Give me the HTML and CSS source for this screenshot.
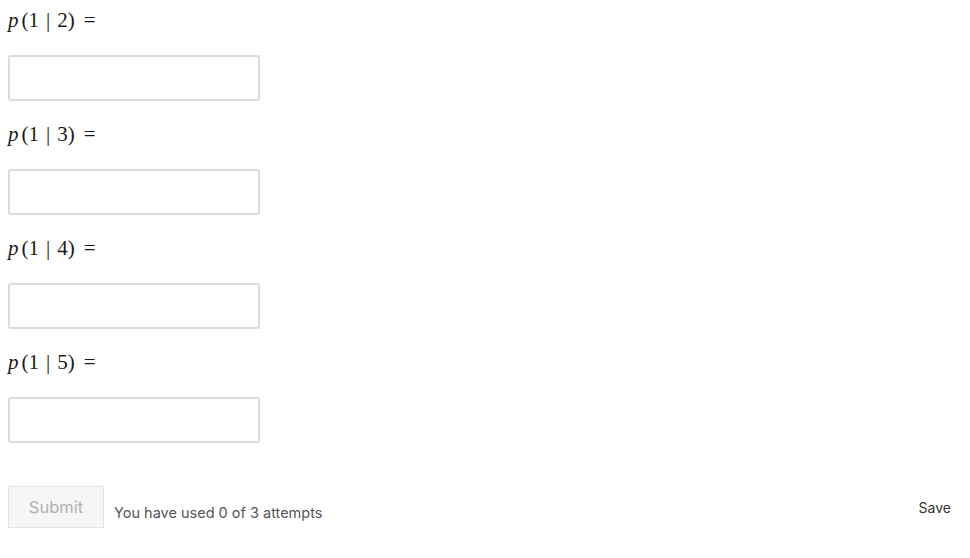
FILE: index.html
```html
<!DOCTYPE html>
<html>
<head>
<meta charset="utf-8">
<link rel="stylesheet" href="styles.css">
</head>
<body>
<div class="problem">
  <div class="item">
    <div class="math"><i class="var">p</i><span class="op">(</span>1<span class="bar">|</span>2<span class="op">)</span><span class="eq">=</span></div>
    <input class="answer" type="text">
  </div>
  <div class="item">
    <div class="math"><i class="var">p</i><span class="op">(</span>1<span class="bar">|</span>3<span class="op">)</span><span class="eq">=</span></div>
    <input class="answer" type="text">
  </div>
  <div class="item">
    <div class="math"><i class="var">p</i><span class="op">(</span>1<span class="bar">|</span>4<span class="op">)</span><span class="eq">=</span></div>
    <input class="answer" type="text">
  </div>
  <div class="item">
    <div class="math"><i class="var">p</i><span class="op">(</span>1<span class="bar">|</span>5<span class="op">)</span><span class="eq">=</span></div>
    <input class="answer" type="text">
  </div>
</div>
<div class="actions">
  <button class="submit" disabled>Submit</button>
  <span class="attempts">You have used 0 of 3 attempts</span>
  <span class="save">Save</span>
</div>
</body>
</html>
```

FILE: styles.css
```css
html, body {
  margin: 0;
  padding: 0;
  background: #fff;
}
body {
  padding: 0 8px;
  font-family: "Inter", "Liberation Sans", sans-serif;
}
.problem {
  display: flex;
  flex-direction: column;
}
.item {
  display: flex;
  flex-direction: column;
  align-items: flex-start;
  height: 114px;
}
.math {
  font-family: "Liberation Serif", "DejaVu Serif", serif;
  font-size: 21px;
  line-height: 24px;
  margin-top: 8px;
  color: #1a1a1a;
}
.math .var {
  font-style: italic;
  margin-right: 3px;
}
.math .bar {
  margin: 0 7px;
}
.math .eq {
  margin-left: 9px;
}
.answer {
  margin-top: 23px;
  width: 252px;
  height: 46px;
  box-sizing: border-box;
  border: 2px solid #dcdcdc;
  border-radius: 3px;
  background: #fff;
  outline: none;
}
.actions {
  display: flex;
  align-items: center;
  margin-top: 30px;
}
.submit {
  width: 96px;
  height: 42px;
  box-sizing: border-box;
  background: #f6f6f6;
  border: 1px solid #e4e4e4;
  border-radius: 0;
  color: #b0b0b0;
  font-family: inherit;
  font-size: 16.5px;
  padding: 0;
}
.attempts {
  margin-left: 10px;
  margin-top: 10px;
  font-size: 14.5px;
  color: #555;
}
.save {
  margin-left: auto;
  margin-right: 11px;
  font-size: 14px;
  color: #333;
}
```
